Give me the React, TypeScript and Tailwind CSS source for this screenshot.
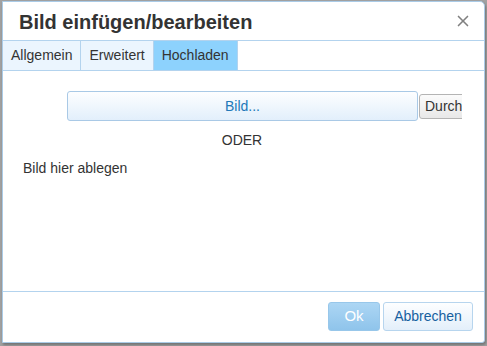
import { X } from 'lucide-react'

export default function App() {
  const tabs = ['Allgemein', 'Erweitert', 'Hochladen']
  const active = 'Hochladen'

  return (
    <div className="w-[487px] h-[346px] bg-[#a2a2a2] pl-[2px] pt-[1px] overflow-hidden font-['Liberation_Sans',Arial,sans-serif]">
      <div className="w-[483px] h-[342px] bg-white border border-[#aacbe7] rounded-tr-[5px] rounded-br-[3px] flex flex-col shadow-[1px_2px_3px_rgba(0,0,0,0.3)]">
        {/* header */}
        <div className="h-[39px] shrink-0 flex items-center justify-between pl-[16px] pr-[12px] border-b border-[#b3d3ee]">
          <span className="text-[20px] font-bold text-[#333] leading-none pt-[2px]">Bild einfügen/bearbeiten</span>
          <X className="w-[18px] h-[18px] text-[#808080]" strokeWidth={2.2} />
        </div>

        {/* tabs */}
        <div className="h-[30px] shrink-0 flex border-b border-[#b3d3ee]">
          {tabs.map(t => (
            <div
              key={t}
              className={`px-2 flex items-center text-[14px] text-[#333] border-r border-[#b3d3ee] ${
                t === active ? 'bg-[#8dd2fd]' : 'bg-[#ebf5fe]'
              }`}
            >
              {t}
            </div>
          ))}
        </div>

        {/* body */}
        <div className="flex-1 flex flex-col">
          <div className="mt-[20px] ml-[64px] w-[395px] overflow-hidden flex items-center gap-[1px]">
            <button className="w-[351px] h-[30px] shrink-0 rounded-[3px] border border-[#a9c9e6] bg-gradient-to-b from-[#fdfeff] to-[#e2effb] text-[14px] text-[#2279b9]">
              Bild...
            </button>
            <button className="h-[25px] shrink-0 px-[5px] rounded-[3px] border border-[#b4b4b4] bg-gradient-to-b from-[#fbfbfb] to-[#e8e8e8] text-[14px] text-[#333] whitespace-nowrap">
              Durchsuchen...
            </button>
          </div>
          <div className="mt-[9px] text-center text-[14px] text-[#333] pr-[3px]">ODER</div>
          <div className="mt-[7px] ml-[20px] text-[14px] text-[#333]">Bild hier ablegen</div>
        </div>

        {/* footer */}
        <div className="h-[51px] shrink-0 border-t border-[#b3d3ee] flex items-start justify-end gap-[3px] pt-[10px] pr-[11px]">
          <button className="w-[52px] h-[29px] rounded-[3px] border border-[#98c7ea] bg-gradient-to-b from-[#acd6f4] to-[#8fc4eb] text-[15px] text-white">
            Ok
          </button>
          <button className="w-[90px] h-[29px] rounded-[3px] border border-[#b7d5ee] bg-gradient-to-b from-[#fdfeff] to-[#e3effa] text-[14px] text-[#17609f]">
            Abbrechen
          </button>
        </div>
      </div>
    </div>
  )
}
